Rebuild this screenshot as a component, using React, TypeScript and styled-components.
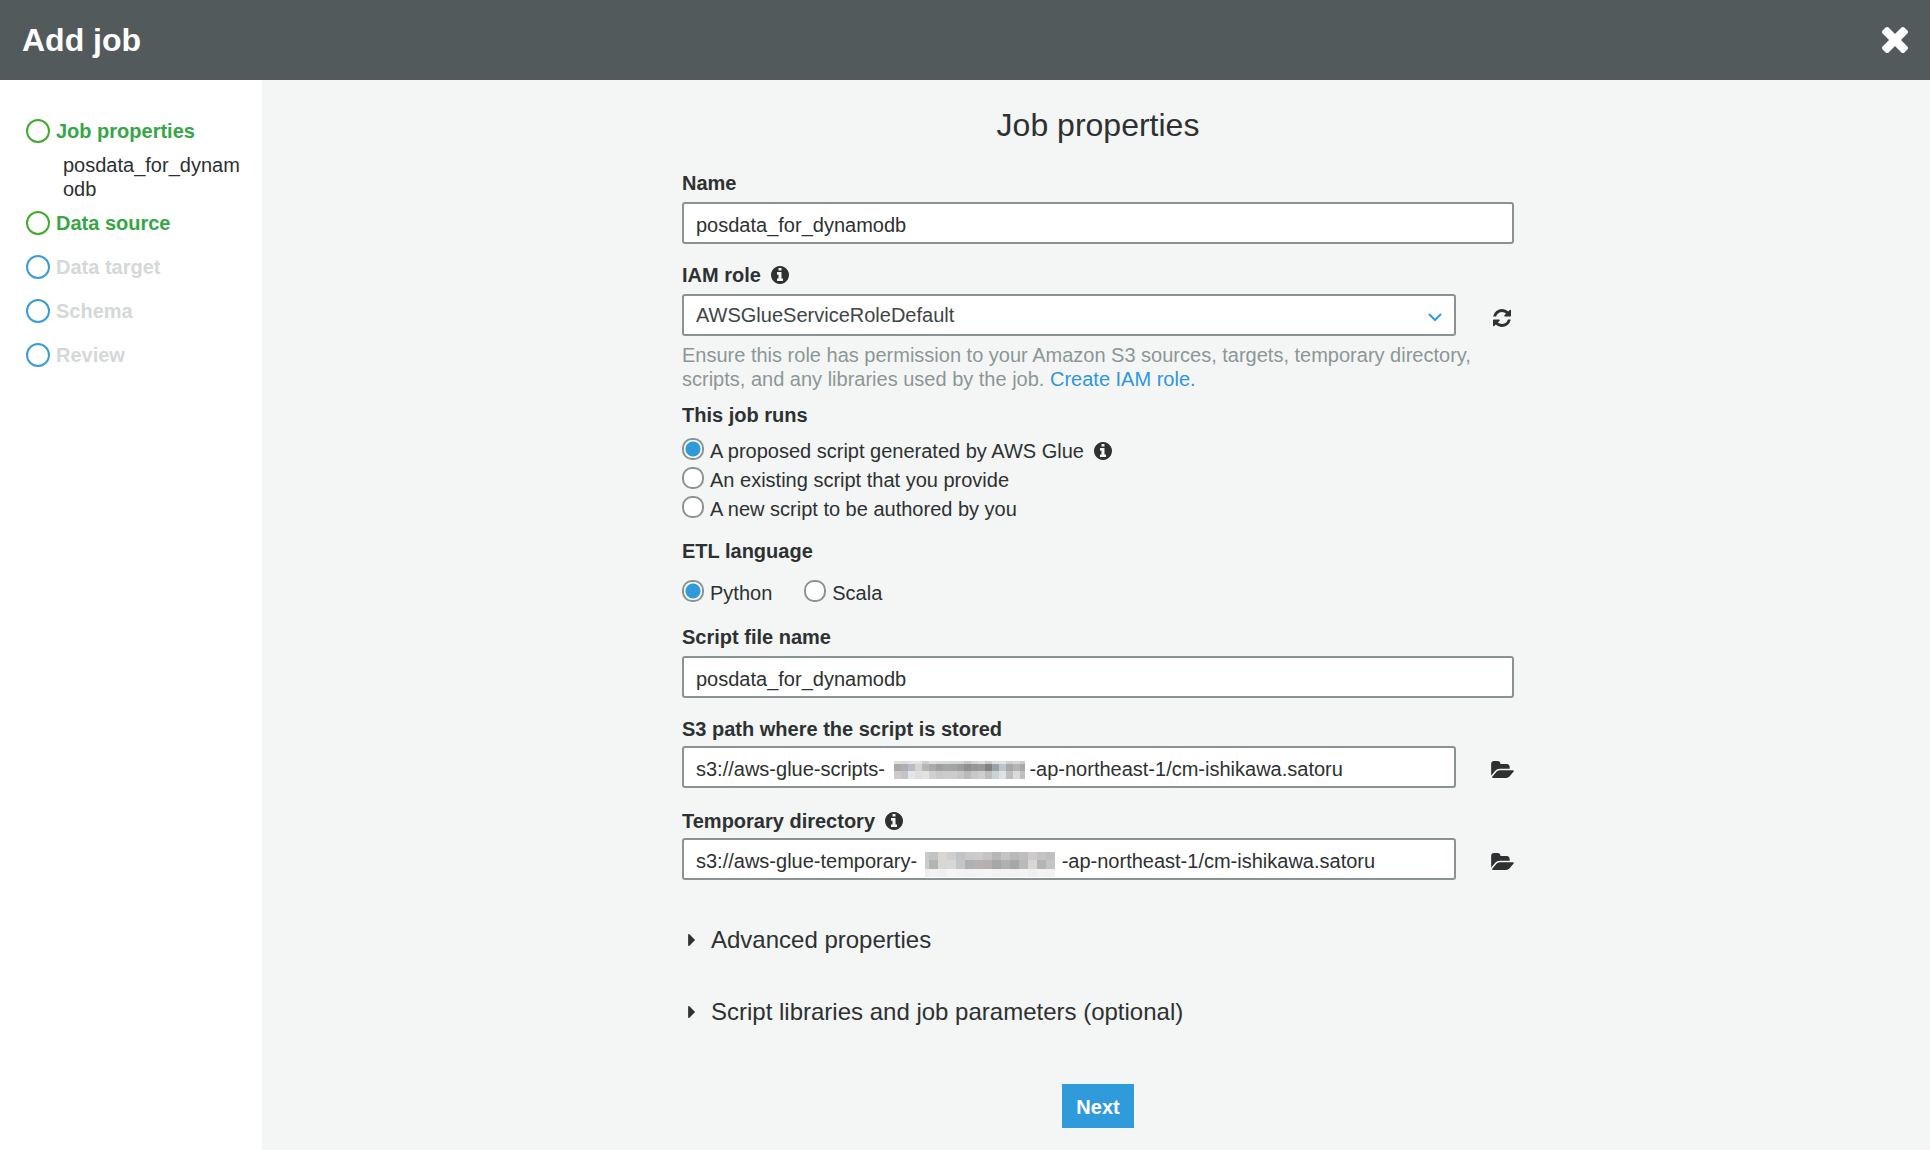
import React from 'react';
import styled, { createGlobalStyle } from 'styled-components';

const GlobalStyle = createGlobalStyle`
  *, *::before, *::after { box-sizing: border-box; }
  body {
    margin: 0;
    background: #f4f6f5;
    color: #2d3131;
    font: 20px/24px "Liberation Sans", Arial, sans-serif;
  }
  button, input, select { font: inherit; color: inherit; }
`;

const Page = styled.div`
  min-height: 100vh;
  display: flex;
  flex-direction: column;
`;

const Header = styled.header`
  height: 80px;
  padding: 0 22px;
  display: flex;
  align-items: center;
  justify-content: space-between;
  background: #525a5c;
  color: #fff;
`;

const HeaderTitle = styled.h1`
  margin: 0;
  font-size: 32px;
  line-height: 40px;
`;

const IconButton = styled.button`
  display: flex;
  justify-content: center;
  padding: 0;
  border: 0;
  background: none;
  cursor: pointer;
`;

const Body = styled.div`
  flex: 1;
  display: flex;
`;

const Sidebar = styled.nav`
  flex: 0 0 262px;
  padding: 39px 20px 0 26px;
  background: #fff;
`;

const Steps = styled.ol`
  margin: 0;
  padding: 0;
  list-style: none;
`;

const Step = styled.li<{ $done?: boolean }>`
  display: grid;
  grid-template-columns: 24px 1fr;
  column-gap: 6px;
  align-items: center;
  min-height: 44px;
  align-content: start;
  font-weight: bold;
  color: ${(p) => (p.$done ? '#36a647' : '#d5d8d8')};

  &::before {
    content: '';
    width: 24px;
    height: 24px;
    border: 2px solid ${(p) => (p.$done ? '#40ab2b' : '#389cdc')};
    border-radius: 50%;
  }
`;

const StepDetail = styled.span`
  grid-column: 1 / -1;
  padding: 10px 0 10px 37px;
  font-weight: normal;
  color: #2d3131;
  word-break: break-all;
`;

const Main = styled.main`
  flex: 1;
  padding: 25px 0 22px 4px;
  display: flex;
  justify-content: center;
`;

const Form = styled.form`
  width: 832px;
  display: flex;
  flex-direction: column;
`;

const Title = styled.h2`
  margin: 0 0 26px;
  font-size: 32px;
  line-height: 40px;
  font-weight: normal;
  text-align: center;
`;

const Field = styled.div<{ $path?: boolean }>`
  display: flex;
  flex-direction: column;
  gap: ${(p) => (p.$path ? 5 : 7)}px;
  margin-bottom: ${(p) => (p.$path ? 21 : 19)}px;
`;

const LabelRow = styled.div`
  display: flex;
  align-items: center;
  gap: 10px;
  font-weight: bold;
`;

const ControlRow = styled.div`
  display: grid;
  grid-template-columns: 1fr 24px;
  column-gap: 34px;
  align-items: center;

  ${IconButton} {
    padding-top: 5px;
  }
`;

const InputBox = styled.div`
  position: relative;
`;

const TextInput = styled.input`
  display: block;
  width: 100%;
  height: 42px;
  padding: 4px 12px 0;
  border: 2px solid #899394;
  border-radius: 3px;
  background: #fff;
`;

const Select = styled.select`
  display: block;
  width: 100%;
  height: 42px;
  padding: 0 12px;
  border: 2px solid #899394;
  border-radius: 3px;
  background: #fff;
  color: #404546;
  appearance: none;
`;

const Chevron = styled.svg`
  position: absolute;
  right: 14px;
  top: 19px;
  pointer-events: none;
`;

const Mosaic = styled.svg<{ $left: number; $top: number }>`
  position: absolute;
  left: ${(p) => p.$left}px;
  top: ${(p) => p.$top}px;
`;

const Hint = styled.p`
  margin: 0 0 12px;
  color: #8c9697;
`;

const RoleField = styled.div`
  display: flex;
  flex-direction: column;
  gap: 7px;
`;

const Link = styled.a`
  color: #2f97dc;
  text-decoration: none;
`;

const Group = styled.fieldset`
  min-width: 0;
  margin: 0 0 18px;
  padding: 0;
  border: 0;
`;

const Legend = styled.legend`
  padding: 0;
  font-weight: bold;
`;

const Options = styled.div<{ $inline?: boolean }>`
  display: flex;
  flex-direction: ${(p) => (p.$inline ? 'row' : 'column')};
  gap: ${(p) => (p.$inline ? '32px' : '5px')};
  padding: ${(p) => (p.$inline ? '18px 0 2px' : '12px 0 0')};
`;

const Option = styled.div`
  display: flex;
  align-items: center;
  height: 24px;
  gap: 10px;
`;

const OptionLabel = styled.label`
  display: flex;
  align-items: center;
  gap: 6px;
`;

const Radio = styled.input`
  appearance: none;
  flex: none;
  width: 22px;
  height: 22px;
  margin: 0 0 4px;
  border: 2px solid #899394;
  border-radius: 10px;
  background: #fff;

  &:checked {
    background: radial-gradient(circle, #309bdb 7px, #fff 8px);
  }
`;

const Expanders = styled.div`
  display: flex;
  flex-direction: column;
  align-items: flex-start;
  gap: 40px;
  padding: 23px 0 56px;
`;

const Expander = styled.button`
  display: flex;
  align-items: center;
  gap: 16px;
  padding: 0 0 0 6px;
  border: 0;
  background: none;
  font-size: 24px;
  line-height: 32px;
  cursor: pointer;
`;

const NextButton = styled.button`
  align-self: center;
  width: 72px;
  height: 44px;
  padding: 2px 0 0;
  border: 0;
  background: #309bdb;
  color: #fff;
  font-weight: bold;
  cursor: pointer;
`;

const CloseIcon = () => (
  <svg width="26" height="26" viewBox="302 366 1188 1188" fill="currentColor" aria-hidden="true">
    <path d="M1490 1322q0 40-28 68l-136 136q-28 28-68 28t-68-28l-294-294-294 294q-28 28-68 28t-68-28l-136-136q-28-28-28-68t28-68l294-294-294-294q-28-28-28-68t28-68l136-136q28-28 68-28t68 28l294 294 294-294q28-28 68-28t68 28l136 136q28 28 28 68t-28 68l-294 294 294 294q28 28 28 68z" />
  </svg>
);

const InfoIcon = () => (
  <svg width="18" height="18" viewBox="128 128 1536 1536" fill="currentColor" aria-hidden="true">
    <path d="M1152 1376v-160q0-14-9-23t-23-9h-96v-512q0-14-9-23t-23-9h-320q-14 0-23 9t-9 23v160q0 14 9 23t23 9h96v320h-96q-14 0-23 9t-9 23v160q0 14 9 23t23 9h448q14 0 23-9t9-23zm-128-896v-160q0-14-9-23t-23-9h-192q-14 0-23 9t-9 23v160q0 14 9 23t23 9h192q14 0 23-9t9-23zm640 416q0 209-103 385.500t-279.500 279.500-385.500 103-385.500-103-279.500-279.500-103-385.500 103-385.500 279.500-279.500 385.500-103 385.500 103 279.500 279.500 103 385.500z" />
  </svg>
);

const RefreshIcon = () => (
  <svg width="18" height="18" viewBox="128 128 1536 1536" fill="currentColor" aria-hidden="true">
    <path d="M1639 1056q0 5-1 7-64 268-268 434.500t-478 166.500q-146 0-282.500-55t-243.500-157l-129 129q-19 19-45 19t-45-19-19-45v-448q0-26 19-45t45-19h448q26 0 45 19t19 45-19 45l-137 137q71 66 161 102t187 36q134 0 250-65t186-179q11-17 53-117 8-23 30-23h192q13 0 22.500 9.500t9.500 22.500zm25-800v448q0 26-19 45t-45 19h-448q-26 0-45-19t-19-45 19-45l138-138q-148-137-349-137-134 0-250 65t-186 179q-11 17-53 117-8 23-30 23h-199q-13 0-22.500-9.500t-9.500-22.500v-7q65-268 270-434.500t480-166.500q146 0 284 55.500t245 156.500l130-129q19-19 45-19t45 19 19 45z" />
  </svg>
);

const FolderIcon = () => (
  <svg width="23" height="17" viewBox="-64 128 1879 1408" fill="currentColor" aria-hidden="true">
    <path d="M1815 952q0 31-31 66l-336 396q-43 51-120.500 86.500t-143.500 35.500h-1088q-34 0-60.500-13t-26.500-43q0-31 31-66l336-396q43-51 120.500-86.500t143.500-35.500h1088q34 0 60.500 13t26.500 43zm-343-344v160h-832q-94 0-197 47.500t-164 119.500l-337 396-5 6q0-4-.5-12.500t-.5-12.500v-960q0-92 66-158t158-66h320q92 0 158 66t66 158v32h544q92 0 158 66t66 158z" />
  </svg>
);

const CaretIcon = () => (
  <svg width="7" height="12" viewBox="576 384 576 1024" fill="currentColor" aria-hidden="true">
    <path d="M1152 896q0 26-19 45l-448 448q-19 19-45 19t-45-19-19-45v-896q0-26 19-45t45-19 45 19l448 448q19 19 19 45z" />
  </svg>
);

type Band = { y: number; h: number; tones: string[] };

const scriptBands: Band[] = [
  { y: 0, h: 3, tones: ['#e0e0e0', '#dcdcdc', '#e6e6e6', '#e4e4e4', '#cfcfcf', '#e0dfdf', '#dcdcdc', '#dadada', '#d8d8d8', '#d5d5d5', '#c5c6c6', '#d4d4d4', '#dedede', '#cccccc', '#dedede', '#e2e2e2', '#d0d0d0', '#d8d8d8', '#cccccc'] },
  { y: 3, h: 7, tones: ['#a9a9aa', '#aeafb1', '#b8bcc8', '#d4d4d4', '#b6b6b6', '#acaaa8', '#a2a09e', '#a6a6a6', '#a0a6a5', '#9a9f9e', '#8f8f8f', '#969696', '#999999', '#828282', '#9ba3a6', '#bcc4cc', '#aaa8a6', '#b4b4b4', '#a7a7a7'] },
  { y: 10, h: 8, tones: ['#cbcbcb', '#c4c4c4', '#e2e6e8', '#dedede', '#e2e2e0', '#cfcfcf', '#c8c8c8', '#cccccc', '#cccccc', '#c6c6c6', '#bababa', '#c8c8c8', '#cecece', '#bdbdbd', '#cdd2d4', '#dfe2e4', '#bebebe', '#dadada', '#bfbfbf'] },
];

const temporaryBands: Band[] = [
  { y: 0, h: 8, tones: ['#cacaca', '#c0c3c2', '#d9d7d3', '#cfcfcf', '#c2c3c6', '#cacaca', '#cccacc', '#c6c2c2', '#b8b5b5', '#c4c4c4', '#b9b9b9', '#bebec0', '#cccaca', '#c3c3c3', '#bfbfc1'] },
  { y: 8, h: 9, tones: ['#cccccc', '#b4b4b4', '#d8d7d4', '#d8d8d8', '#c4c5c8', '#b0b0b2', '#b6b2b2', '#b4b0b0', '#a6a6a6', '#b0b0b0', '#a7a7a5', '#b9b9bd', '#d9d5d1', '#b4b4b4', '#c4c4c6'] },
  { y: 17, h: 8, tones: ['#eeeeee', '#f2f2f2', '#f0f0f0', '#f6f6f6', '#f4f4f4', '#f2f2f2', '#f3f3f3', '#f5f5f5', '#f2f2f2', '#f3f3f3', '#f2f2f2', '#f4f4f4', '#efefef', '#f3f3f3', '#f1f1f1'] },
];

type RedactionProps = { bands: Band[]; left: number; top: number; tile: number; start?: number };

const Redaction = ({ bands, left, top, tile, start = 0 }: RedactionProps) => (
  <Mosaic $left={left} $top={top} width="131" height="25" viewBox="0 0 131 25" shapeRendering="crispEdges" aria-hidden="true">
    {bands.map((band) =>
      band.tones.map((tone, i) => (
        <rect key={`${band.y}-${i}`} x={start + i * tile} y={band.y} width={tile} height={band.h} fill={tone} />
      )),
    )}
  </Mosaic>
);

const hidden = (count: number) => '\u00a0'.repeat(count);

export default function App() {
  return (
    <>
      <GlobalStyle />
      <Page>
        <Header>
          <HeaderTitle>Add job</HeaderTitle>
          <IconButton type="button" aria-label="Close">
            <CloseIcon />
          </IconButton>
        </Header>
        <Body>
          <Sidebar>
            <Steps>
              <Step $done>
                Job properties
                <StepDetail>posdata_for_dynamodb</StepDetail>
              </Step>
              <Step $done>Data source</Step>
              <Step>Data target</Step>
              <Step>Schema</Step>
              <Step>Review</Step>
            </Steps>
          </Sidebar>
          <Main>
            <Form onSubmit={(e) => e.preventDefault()}>
              <Title>Job properties</Title>

              <Field>
                <LabelRow>
                  <label htmlFor="name">Name</label>
                </LabelRow>
                <TextInput id="name" defaultValue="posdata_for_dynamodb" />
              </Field>

              <RoleField>
                <LabelRow>
                  <label htmlFor="role">IAM role</label>
                  <InfoIcon />
                </LabelRow>
                <ControlRow>
                  <InputBox>
                    <Select id="role" defaultValue="AWSGlueServiceRoleDefault">
                      <option>AWSGlueServiceRoleDefault</option>
                    </Select>
                    <Chevron width="14" height="9" viewBox="0 0 14 9" fill="none" stroke="#309bdb" strokeWidth="2">
                      <path d="M1 1 7 7 13 1" />
                    </Chevron>
                  </InputBox>
                  <IconButton type="button" aria-label="Refresh">
                    <RefreshIcon />
                  </IconButton>
                </ControlRow>
                <Hint>
                  Ensure this role has permission to your Amazon S3 sources, targets, temporary directory, scripts, and
                  any libraries used by the job. <Link href="#">Create IAM role.</Link>
                </Hint>
              </RoleField>

              <Group>
                <Legend>This job runs</Legend>
                <Options>
                  <Option>
                    <OptionLabel>
                      <Radio type="radio" name="runs" defaultChecked />A proposed script generated by AWS Glue
                    </OptionLabel>
                    <InfoIcon />
                  </Option>
                  <Option>
                    <OptionLabel>
                      <Radio type="radio" name="runs" />An existing script that you provide
                    </OptionLabel>
                  </Option>
                  <Option>
                    <OptionLabel>
                      <Radio type="radio" name="runs" />A new script to be authored by you
                    </OptionLabel>
                  </Option>
                </Options>
              </Group>

              <Group>
                <Legend>ETL language</Legend>
                <Options $inline>
                  <Option>
                    <OptionLabel>
                      <Radio type="radio" name="language" defaultChecked />Python
                    </OptionLabel>
                  </Option>
                  <Option>
                    <OptionLabel>
                      <Radio type="radio" name="language" />Scala
                    </OptionLabel>
                  </Option>
                </Options>
              </Group>

              <Field>
                <LabelRow>
                  <label htmlFor="script">Script file name</label>
                </LabelRow>
                <TextInput id="script" defaultValue="posdata_for_dynamodb" />
              </Field>

              <Field $path>
                <LabelRow>
                  <label htmlFor="path">S3 path where the script is stored</label>
                </LabelRow>
                <ControlRow>
                  <InputBox>
                    <TextInput
                      id="path"
                      defaultValue={`s3://aws-glue-scripts-${hidden(26)}-ap-northeast-1/cm-ishikawa.satoru`}
                    />
                    <Redaction bands={scriptBands} left={212} top={15} tile={7} />
                  </InputBox>
                  <IconButton type="button" aria-label="Browse script path">
                    <FolderIcon />
                  </IconButton>
                </ControlRow>
              </Field>

              <Field $path>
                <LabelRow>
                  <label htmlFor="temp">Temporary directory</label>
                  <InfoIcon />
                </LabelRow>
                <ControlRow>
                  <InputBox>
                    <TextInput
                      id="temp"
                      defaultValue={`s3://aws-glue-temporary-${hidden(26)}-ap-northeast-1/cm-ishikawa.satoru`}
                    />
                    <Redaction bands={temporaryBands} left={243} top={14} tile={9} start={-5} />
                  </InputBox>
                  <IconButton type="button" aria-label="Browse temporary directory">
                    <FolderIcon />
                  </IconButton>
                </ControlRow>
              </Field>

              <Expanders>
                <Expander type="button" aria-expanded="false">
                  <CaretIcon />
                  Advanced properties
                </Expander>
                <Expander type="button" aria-expanded="false">
                  <CaretIcon />
                  Script libraries and job parameters (optional)
                </Expander>
              </Expanders>

              <NextButton type="submit">Next</NextButton>
            </Form>
          </Main>
        </Body>
      </Page>
    </>
  );
}
